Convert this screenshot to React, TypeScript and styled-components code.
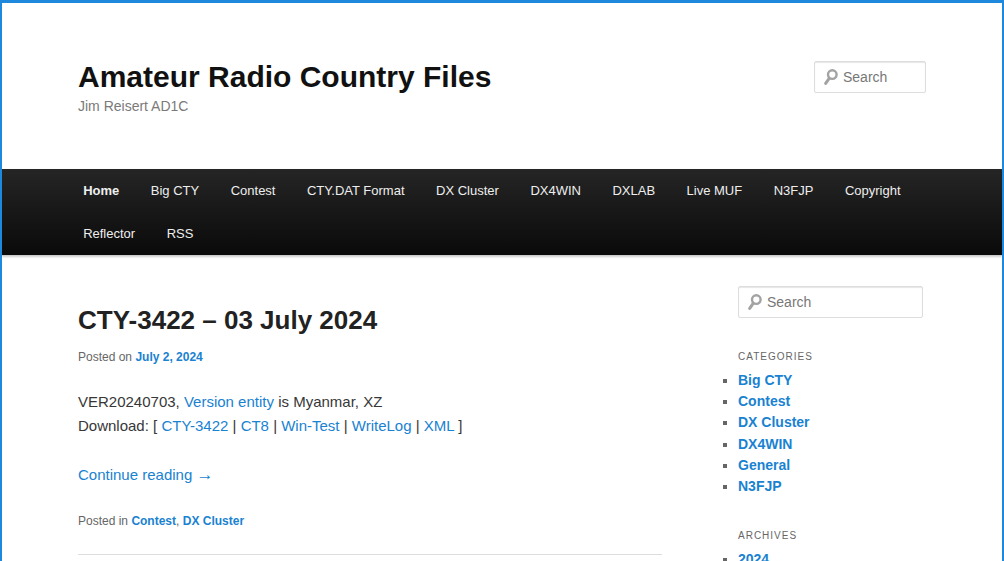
import React from "react";
import styled, { createGlobalStyle } from "styled-components";

const GlobalStyle = createGlobalStyle`
  html, body {
    margin: 0;
    padding: 0;
    background: #fff;
    overflow: hidden;
  }
  body {
    font-family: "Liberation Sans", Arial, sans-serif;
    color: #373737;
  }
`;

const Frame = styled.div`
  box-sizing: border-box;
  width: 1004px;
  height: 561px;
  border: solid #1e88dc;
  border-width: 3px 2px 0;
  overflow: hidden;
`;

const Header = styled.header`
  height: 166px;
  box-sizing: border-box;
  padding: 56px 76px 0;
  display: flex;
  justify-content: space-between;
  align-items: flex-start;
`;

const SiteTitle = styled.h1`
  margin: 0;
  font-size: 30px;
  line-height: 36px;
  font-weight: 700;
  color: #111;
`;

const SiteDescription = styled.h2`
  margin: 0;
  font-size: 14px;
  line-height: 23px;
  font-weight: 400;
  color: #7a7a7a;
`;

const SearchBox = styled.div<{ $width: number }>`
  box-sizing: border-box;
  width: ${(p) => p.$width}px;
  height: 32px;
  display: flex;
  align-items: center;
  gap: 5px;
  padding-left: 9px;
  background: #fff;
  border: 1px solid #ddd;
  border-radius: 2px;
  box-shadow: inset 0 1px 1px rgba(0, 0, 0, 0.1);
  font-size: 14px;
  color: #777;
`;

const HeaderSearch = styled(SearchBox)`
  margin: 2px 0 0;
`;

const Nav = styled.nav`
  height: 87px;
  box-sizing: border-box;
  padding: 0 85px 0 65.4px;
  background: linear-gradient(#252525, #0a0a0a);
  border-bottom: 1px solid #ccc;
  box-shadow: 0 1px 2px rgba(0, 0, 0, 0.2);
`;

const NavList = styled.ul`
  margin: 0;
  padding: 0;
  list-style: none;
  display: flex;
  flex-wrap: wrap;
`;

const NavLink = styled.a<{ $current?: boolean }>`
  display: block;
  padding: 0 15.76px;
  font-size: 13px;
  line-height: 43px;
  color: #eee;
  font-weight: ${(p) => (p.$current ? 700 : 400)};
  text-decoration: none;
`;

const Columns = styled.div`
  display: flex;
  gap: 76px;
  padding: 29px 0 0 76px;
`;

const Main = styled.main`
  width: 584px;
  flex: none;
`;

const PostTitle = styled.h1`
  margin: 18px 0 0;
  font-size: 26px;
  line-height: 34px;
  font-weight: 700;
  color: #222;
`;

const Meta = styled.div`
  font-size: 12px;
  line-height: 18px;
  color: #666;
`;

const PostedOn = styled(Meta)`
  margin-top: 11px;
`;

const Link = styled.a`
  color: #1982d1;
  text-decoration: none;
`;

const BoldLink = styled(Link)`
  font-weight: 700;
`;

const Arrow = styled.span`
  font-size: 17px;
  line-height: 1;
`;

const Body = styled.p`
  margin: 24px 0 0;
  font-size: 15px;
  line-height: 24.4px;
  color: #373737;
`;

const PostFooter = styled(Meta)`
  margin-top: 25px;
`;

const Divider = styled.hr`
  margin: 24px 0 0;
  border: 0;
  border-top: 1px solid #ddd;
`;

const Sidebar = styled.aside`
  width: 185px;
  flex: none;
`;

const SidebarSearch = styled(SearchBox)`
  margin-top: 1px;
`;

const WidgetTitle = styled.h3`
  margin: 0;
  font-size: 10px;
  line-height: 15px;
  font-weight: 500;
  letter-spacing: 1px;
  text-transform: uppercase;
  color: #666;
`;

const Widget = styled.section<{ $top: number }>`
  margin-top: ${(p) => p.$top}px;
`;

const WidgetList = styled.ul`
  margin: 6px 0 0;
  padding: 0;
  list-style: square;
  color: #666;
`;

const WidgetItem = styled.li`
  font-size: 14px;
  line-height: 21.2px;
`;

const SearchGlyph = () => (
  <svg width="14" height="16" viewBox="0 0 14 16" fill="none" aria-hidden="true">
    <circle cx="8.3" cy="5.6" r="4.3" stroke="#a3a3a3" strokeWidth="2.4" />
    <path d="M5 9.6 1.7 14.4" stroke="#a3a3a3" strokeWidth="3" strokeLinecap="round" />
  </svg>
);

const menu = ["Big CTY", "Contest", "CTY.DAT Format", "DX Cluster", "DX4WIN", "DXLAB", "Live MUF", "N3FJP", "Copyright", "Reflector", "RSS"];
const categories = ["Big CTY", "Contest", "DX Cluster", "DX4WIN", "General", "N3FJP"];

export default function App() {
  return (
    <Frame>
      <GlobalStyle />
      <Header>
        <div>
          <SiteTitle>Amateur Radio Country Files</SiteTitle>
          <SiteDescription>Jim Reisert AD1C</SiteDescription>
        </div>
        <HeaderSearch $width={112}>
          <SearchGlyph />
          Search
        </HeaderSearch>
      </Header>
      <Nav>
        <NavList>
          <li>
            <NavLink href="#" $current>
              Home
            </NavLink>
          </li>
          {menu.map((item) => (
            <li key={item}>
              <NavLink href="#">{item}</NavLink>
            </li>
          ))}
        </NavList>
      </Nav>
      <Columns>
        <Main>
          <PostTitle>CTY-3422 – 03 July 2024</PostTitle>
          <PostedOn>
            Posted on <BoldLink href="#">July 2, 2024</BoldLink>
          </PostedOn>
          <Body>
            VER20240703, <Link href="#">Version entity</Link> is Myanmar, XZ
            <br />
            Download: [ <Link href="#">CTY-3422</Link> | <Link href="#">CT8</Link> | <Link href="#">Win-Test</Link> |{" "}
            <Link href="#">WriteLog</Link> | <Link href="#">XML</Link> ]
          </Body>
          <Body>
            <Link href="#">
              Continue reading <Arrow>→</Arrow>
            </Link>
          </Body>
          <PostFooter>
            Posted in <BoldLink href="#">Contest</BoldLink>, <BoldLink href="#">DX Cluster</BoldLink>
          </PostFooter>
          <Divider />
        </Main>
        <Sidebar>
          <SidebarSearch $width={185}>
            <SearchGlyph />
            Search
          </SidebarSearch>
          <Widget $top={31}>
            <WidgetTitle>Categories</WidgetTitle>
            <WidgetList>
              {categories.map((c) => (
                <WidgetItem key={c}>
                  <BoldLink href="#">{c}</BoldLink>
                </WidgetItem>
              ))}
            </WidgetList>
          </Widget>
          <Widget $top={31}>
            <WidgetTitle>Archives</WidgetTitle>
            <WidgetList>
              <WidgetItem>
                <BoldLink href="#">2024</BoldLink>
              </WidgetItem>
            </WidgetList>
          </Widget>
        </Sidebar>
      </Columns>
    </Frame>
  );
}
